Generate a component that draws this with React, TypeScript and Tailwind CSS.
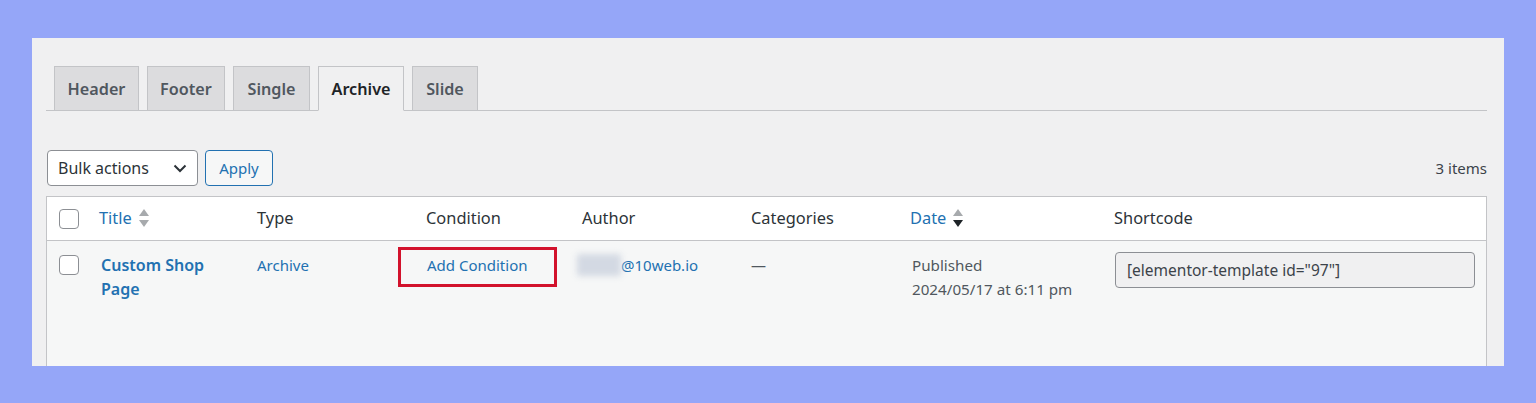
import React from "react";

const SortIcon = ({ active }: { active?: boolean }) => (
  <svg width="10" height="20" viewBox="0 0 10 20" className="ml-[7px] shrink-0">
    <polygon points="5,1 10,8 0,8" fill="#a7aaad" />
    <polygon points="0,12 10,12 5,19" fill={active ? "#1d2327" : "#a7aaad"} />
  </svg>
);

const Checkbox = ({ className = "" }: { className?: string }) => (
  <div className={`w-[20px] h-[20px] rounded-[4px] border border-[#8c8f94] bg-white ${className}`} />
);

const tabs = [
  { label: "Header", w: "w-[85px]" },
  { label: "Footer", w: "w-[78px]" },
  { label: "Single", w: "w-[77px]" },
  { label: "Archive", w: "w-[86px]", active: true },
  { label: "Slide", w: "w-[66px]" },
];

export default function App() {
  const cols = "grid grid-cols-[42px_158px_169px_156px_169px_159px_204px_383px]";
  return (
    <div className="w-[1536px] h-[403px] bg-[#95a6f8] pt-[38px] pl-[32px] font-['Noto_Sans',sans-serif] overflow-hidden">
      <div className="w-[1472px] h-[328px] bg-[#f0f0f1] overflow-hidden pl-[14px] pr-[17px] pt-[28px]">
        {/* Tabs */}
        <div className="flex gap-[8px] border-b border-[#c3c4c7] pl-[8px]">
          {tabs.map((t) => (
            <div
              key={t.label}
              className={`${t.w} h-[45px] -mb-px pt-[2px] flex items-center justify-center border text-[16.2px] font-semibold ${
                t.active
                  ? "bg-[#f0f0f1] border-[#c3c4c7] border-b-[#f0f0f1] text-[#1d2327]"
                  : "bg-[#dcdcde] border-[#c3c4c7] text-[#50575e]"
              }`}
            >
              {t.label}
            </div>
          ))}
        </div>

        {/* Toolbar */}
        <div className="mt-[39px] flex items-center justify-between h-[36px] pl-px">
          <div className="flex items-center">
            <div className="w-[151px] h-[36px] border border-[#8c8f94] rounded-[4px] bg-white pl-[10px] pr-[10px] flex items-center justify-between text-[16px] text-[#2c3338]">
              <span>Bulk actions</span>
              <svg width="14" height="9" viewBox="0 0 14 9">
                <path d="M1.5 1.5 L7 7 L12.5 1.5" fill="none" stroke="#2c3338" strokeWidth="2" />
              </svg>
            </div>
            <div className="ml-[7px] w-[68px] h-[36px] border border-[#2271b1] rounded-[4px] bg-[#f6f7f7] text-[#2271b1] text-[15px] flex items-center justify-center">
              Apply
            </div>
          </div>
          <div className="text-[15px] text-[#3c434a]">3 items</div>
        </div>

        {/* Table */}
        <div className="mt-[10px] border border-[#c3c4c7] bg-[#f6f7f7] h-[200px]">
          <div className={`${cols} h-[44px] bg-white border-b border-[#c3c4c7] items-center text-[16.4px] text-[#2c3338]`}>
            <div className="pl-[12px]">
              <Checkbox />
            </div>
            <div className="pl-[10px] flex items-center text-[#2271b1]">
              Title
              <SortIcon />
            </div>
            <div className="pl-[10px]">Type</div>
            <div className="pl-[10px]">Condition</div>
            <div className="pl-[10px]">Author</div>
            <div className="pl-[10px]">Categories</div>
            <div className="pl-[10px] flex items-center text-[#2271b1]">
              Date
              <SortIcon active />
            </div>
            <div className="pl-[10px]">Shortcode</div>
          </div>

          <div className={`${cols} items-start pt-[12px] text-[15px] leading-[24px]`}>
            <div className="pl-[12px]">
              <Checkbox className="mt-[2px]" />
            </div>
            <div className="pl-[12px] pr-[20px] text-[16px] font-semibold text-[#2271b1]">
              Custom Shop Page
            </div>
            <div className="pl-[10px] text-[#2271b1]">Archive</div>
            <div className="pl-[11px]">
              <span className="relative inline-block text-[#2271b1]">
                Add Condition
                <span className="absolute left-[-29px] top-[-6px] w-[159px] h-[40px] border-[3px] border-[#d2122c]" />
              </span>
            </div>
            <div className="pl-[5px] flex items-center">
              <span className="inline-block w-[44px] h-[22px] bg-[#d3d9e3] blur-[3px] rounded-[2px]" />
              <span className="text-[#2271b1]">@10web.io</span>
            </div>
            <div className="pl-[10px] text-[#50575e]">—</div>
            <div className="pl-[12px] text-[#50575e] text-[15.2px]">
              <div>Published</div>
              <div>2024/05/17 at 6:11 pm</div>
            </div>
            <div className="pl-[11px]">
              <div className="-mt-px w-[360px] h-[36px] border border-[#8c8f94] rounded-[4px] bg-[#f0f0f1] px-[11px] flex items-center text-[15.5px] text-[#3c434a]">
                [elementor-template id="97"]
              </div>
            </div>
          </div>
        </div>
      </div>
    </div>
  );
}
